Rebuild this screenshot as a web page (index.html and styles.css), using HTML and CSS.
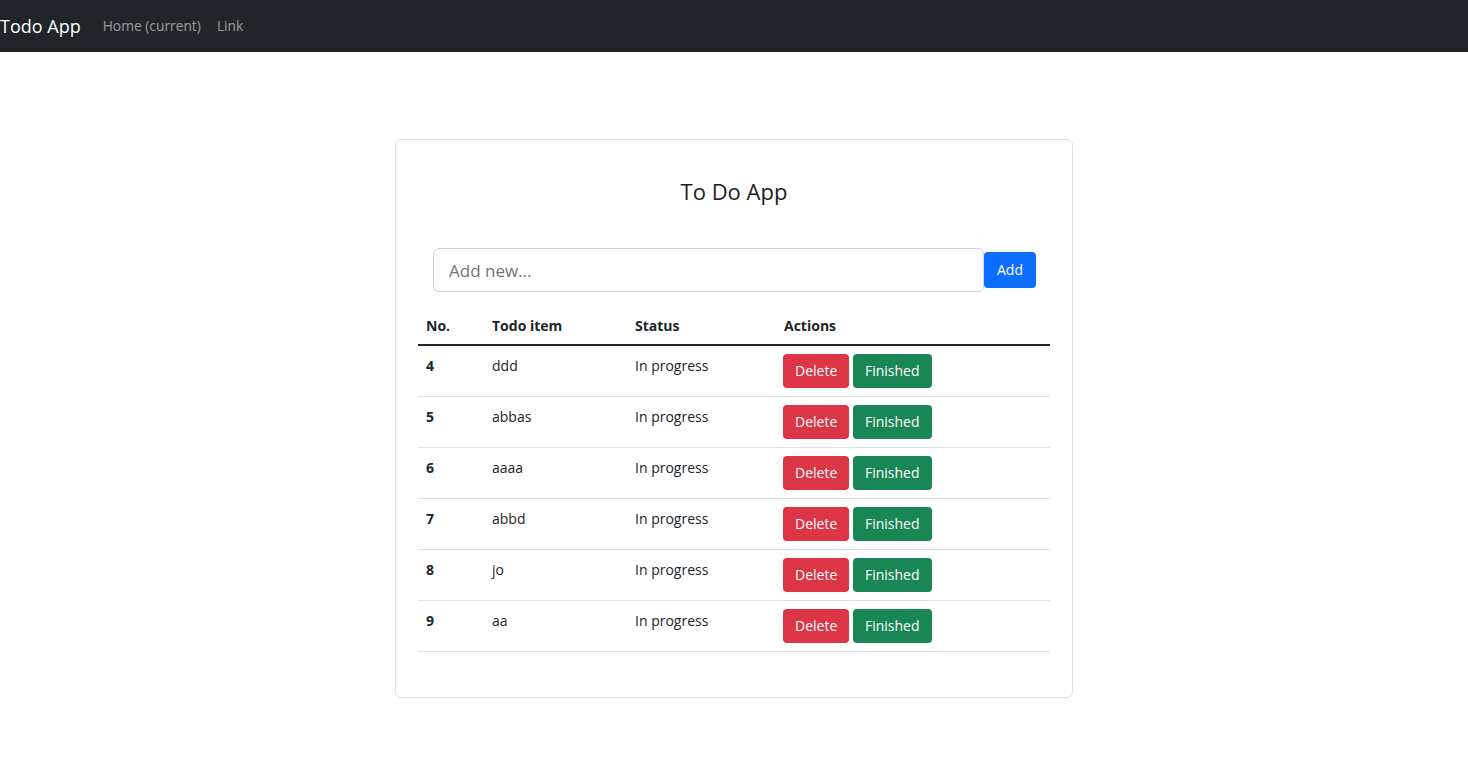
FILE: index.html
```html
<!DOCTYPE html>
<html lang="en">
<head>
  <meta charset="UTF-8" />
  <meta name="viewport" content="width=device-width, initial-scale=1.0">
  <title>Todo App</title>
  <link rel="stylesheet" href="styles.css">
</head>
<body>
  <nav class="navbar">
    <a class="brand" href="#">Todo App</a>
    <ul class="nav-links">
      <li><a href="#">Home (current)</a></li>
      <li><a href="#">Link</a></li>
    </ul>
  </nav>

  <main class="page">
    <div class="card">
      <h5 class="card-title">To Do App</h5>

      <form class="add-form">
        <input type="text" class="add-input" placeholder="Add new...">
        <button type="button" class="btn btn-primary">Add</button>
      </form>

      <table class="todo-table">
        <thead>
          <tr>
            <th class="col-no">No.</th>
            <th class="col-item">Todo item</th>
            <th class="col-status">Status</th>
            <th>Actions</th>
          </tr>
        </thead>
        <tbody>
          <tr>
            <th>4</th>
            <td>ddd</td>
            <td>In progress</td>
            <td><button class="btn btn-danger">Delete</button> <button class="btn btn-success">Finished</button></td>
          </tr>
          <tr>
            <th>5</th>
            <td>abbas</td>
            <td>In progress</td>
            <td><button class="btn btn-danger">Delete</button> <button class="btn btn-success">Finished</button></td>
          </tr>
          <tr>
            <th>6</th>
            <td>aaaa</td>
            <td>In progress</td>
            <td><button class="btn btn-danger">Delete</button> <button class="btn btn-success">Finished</button></td>
          </tr>
          <tr>
            <th>7</th>
            <td>abbd</td>
            <td>In progress</td>
            <td><button class="btn btn-danger">Delete</button> <button class="btn btn-success">Finished</button></td>
          </tr>
          <tr>
            <th>8</th>
            <td>jo</td>
            <td>In progress</td>
            <td><button class="btn btn-danger">Delete</button> <button class="btn btn-success">Finished</button></td>
          </tr>
          <tr>
            <th>9</th>
            <td>aa</td>
            <td>In progress</td>
            <td><button class="btn btn-danger">Delete</button> <button class="btn btn-success">Finished</button></td>
          </tr>
        </tbody>
      </table>
    </div>
  </main>
</body>
</html>
```

FILE: styles.css
```css
:root {
  --dark: #212529;
  --border: #dee2e6;
  --primary: #0d6efd;
  --danger: #dc3545;
  --success: #198754;
}

body {
  margin: 0;
  font-family: "Open Sans", "Noto Sans", "Liberation Sans", sans-serif;
  font-size: 14px;
  line-height: 24px;
  color: var(--dark);
  background: #fff;
}

.navbar {
  display: flex;
  align-items: center;
  height: 52px;
  background: var(--dark);
}

.brand {
  color: #fff;
  font-size: 18px;
  text-decoration: none;
  margin-right: 14px;
}

.nav-links {
  display: flex;
  list-style: none;
  margin: 0;
  padding: 0;
}

.nav-links a {
  display: block;
  padding: 8px;
  font-size: 13.8px;
  color: rgba(255, 255, 255, 0.55);
  text-decoration: none;
}

.page {
  display: flex;
  justify-content: center;
  padding-top: 87px;
}

.card {
  width: 632px;
  padding: 39px 22px 45px;
  border: 1px solid rgba(0, 0, 0, 0.125);
  border-radius: 6px;
}

.card-title {
  margin: 0 0 45px;
  font-size: 22px;
  line-height: 24px;
  font-weight: 500;
  color: #1a1d20;
  text-align: center;
}

.add-form {
  display: flex;
  align-items: center;
  margin: 0 14px 12px 15px;
}

.add-input {
  flex: 1;
  height: 44px;
  box-sizing: border-box;
  padding: 8px 15px;
  font-family: inherit;
  font-size: 17px;
  color: var(--dark);
  border: 1px solid #ced4da;
  border-radius: 6px;
}

.add-input::placeholder {
  color: #6c757d;
}

.btn {
  font-family: inherit;
  font-size: 14px;
  line-height: 24px;
  padding: 4px 11px;
  border: 1px solid transparent;
  border-radius: 4px;
  color: #fff;
  cursor: pointer;
}

.btn-primary {
  background: var(--primary);
  padding: 5px 12px;
}

.btn-danger {
  background: var(--danger);
}

.btn-success {
  background: var(--success);
}

.todo-table {
  width: 100%;
  border-collapse: collapse;
}

.todo-table th,
.todo-table td {
  padding: 8px;
  text-align: left;
  vertical-align: top;
  border-bottom: 1px solid var(--border);
}

.todo-table thead th {
  padding: 10px 8px 6px;
  border-bottom: 2px solid var(--dark);
}

.todo-table td:last-child {
  padding-left: 7px;
}

.col-no {
  width: 50px;
}

.col-item {
  width: 127px;
}

.col-status {
  width: 133px;
}
```
